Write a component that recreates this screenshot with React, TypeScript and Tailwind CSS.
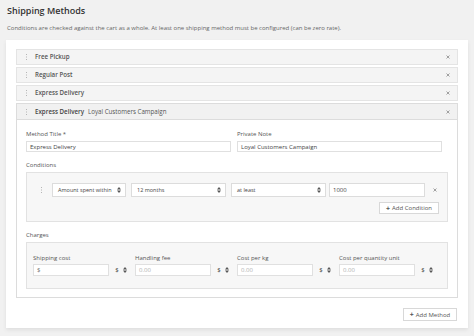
import React from "react";

function Handle() {
  return (
    <svg width="3" height="6" viewBox="0 0 3 6" className="shrink-0">
      <rect x="1" y="0" width="1" height="1" fill="#b5b5b5" />
      <rect x="1" y="2.5" width="1" height="1" fill="#b5b5b5" />
      <rect x="1" y="5" width="1" height="1" fill="#b5b5b5" />
    </svg>
  );
}

function Arrows() {
  return (
    <svg width="4" height="6" viewBox="0 0 4 6" className="shrink-0">
      <path d="M2 0 L4 2.4 L0 2.4 Z" fill="#555" />
      <path d="M2 6 L4 3.6 L0 3.6 Z" fill="#555" />
    </svg>
  );
}

function Close() {
  return (
    <svg width="4" height="4" viewBox="0 0 4 4" className="shrink-0">
      <path d="M0.5 0.5 L3.5 3.5 M3.5 0.5 L0.5 3.5" stroke="#a0a0a0" strokeWidth="1" />
    </svg>
  );
}

function Row({ title }: { title: string }) {
  return (
    <div className="h-[16px] flex items-center bg-[#f4f4f4] border border-[#e4e4e4] pl-[8px] pr-[7px]">
      <Handle />
      <span className="ml-[7px] text-[6.2px] font-semibold text-[#555]">{title}</span>
      <span className="ml-auto flex">
        <Close />
      </span>
    </div>
  );
}

function Select({ label, w }: { label: string; w: string }) {
  return (
    <div className={`${w} h-[14px] bg-white border border-[#dcdcdc] flex items-center pl-[5px] pr-[4px]`}>
      <span className="text-[5.5px] text-[#444]">{label}</span>
      <span className="ml-auto flex">
        <Arrows />
      </span>
    </div>
  );
}

function Charge({ label, value, muted }: { label: string; value: string; muted?: boolean }) {
  return (
    <div>
      <p className="text-[6px] leading-[8px] text-[#555]">{label}</p>
      <div className="mt-[2px] flex items-center">
        <div className="flex-1 h-[12px] bg-white border border-[#e0e0e0] flex items-center pl-[3px]">
          <span className={`text-[6px] ${muted ? "text-[#b0b0b0]" : "text-[#777]"}`}>{value}</span>
        </div>
        <div className="w-[20px] ml-[2px] flex items-center justify-center gap-[4px]">
          <span className="text-[6px] text-[#444]">$</span>
          <Arrows />
        </div>
      </div>
    </div>
  );
}

export default function App() {
  return (
    <div className="w-[474px] h-[336px] overflow-hidden bg-[#f1f1f1] font-['Open_Sans',sans-serif] text-[6px] leading-[8px] pt-[5px]">
      <h2 className="px-[7px] text-[9px] leading-[12px] font-semibold text-[#333]">Shipping Methods</h2>
      <p className="px-[7px] mt-[7px] text-[6px] leading-[8px] text-[#666]">
        Conditions are checked against the cart as a whole. At least one shipping method must be configured (can be zero rate).
      </p>

      <div className="ml-[6px] mt-[8px] w-[462px] h-[288px] bg-white shadow-[0_2px_4px_rgba(0,0,0,0.08)] px-[10px] pt-[9px] pb-[7px] flex flex-col">
        <div className="flex flex-col gap-[2px]">
          <Row title="Free Pickup" />
          <Row title="Regular Post" />
          <Row title="Express Delivery" />
        </div>

        <div className="mt-[2px] border border-[#dcdcdc]">
          <div className="h-[16px] flex items-center bg-[#f1f1f1] border-b border-[#dcdcdc] pl-[8px] pr-[7px]">
            <Handle />
            <span className="ml-[7px] text-[6.2px] font-semibold text-[#444]">Express Delivery</span>
            <span className="ml-[4px] text-[6.2px] text-[#555]">Loyal Customers Campaign</span>
            <span className="ml-auto flex">
              <Close />
            </span>
          </div>

          <div className="px-[9px] pt-[10px] pb-[8px]">
            <div className="grid grid-cols-2 gap-[6px] pr-[6px]">
              <div>
                <p className="text-[6px] leading-[8px] text-[#555]">Method Title *</p>
                <div className="mt-[3px] h-[11px] border border-[#e0e0e0] flex items-center pl-[3px]">
                  <span className="text-[6px] text-[#444]">Express Delivery</span>
                </div>
              </div>
              <div>
                <p className="text-[6px] leading-[8px] text-[#555]">Private Note</p>
                <div className="mt-[3px] h-[11px] border border-[#e0e0e0] flex items-center pl-[3px]">
                  <span className="text-[6px] text-[#444]">Loyal Customers Campaign</span>
                </div>
              </div>
            </div>

            <p className="mt-[9px] text-[6px] leading-[8px] text-[#555]">Conditions</p>
            <div className="mt-[3px] h-[50px] bg-[#f7f7f7] border border-[#e2e2e2] pt-[10px] pr-[8px] pl-[13px]">
              <div className="flex items-center">
                <Handle />
                <div className="ml-[9px] flex items-center gap-[5px]">
                  <Select label="Amount spent within" w="w-[74px]" />
                  <Select label="12 months" w="w-[95px]" />
                  <Select label="at least" w="w-[95px]" />
                  <div className="w-[96px] h-[14px] bg-white border border-[#dcdcdc] flex items-center pl-[3px] -ml-[2px]">
                    <span className="text-[6px] text-[#444]">1000</span>
                  </div>
                </div>
                <span className="ml-[8px] flex">
                  <Close />
                </span>
              </div>
              <div className="mt-[5px] flex justify-end">
                <div className="h-[12px] w-[60px] bg-white border border-[#d8d8d8] flex items-center justify-center gap-[2px]">
                  <span className="text-[7px] leading-none font-bold text-[#555]">+</span>
                  <span className="text-[6px] text-[#555]">Add Condition</span>
                </div>
              </div>
            </div>

            <p className="mt-[9px] text-[6px] leading-[8px] text-[#555]">Charges</p>
            <div className="mt-[3px] h-[47px] bg-[#f7f7f7] border border-[#e2e2e2] pt-[11px] pl-[6px] pr-[10px]">
              <div className="grid grid-cols-4 gap-[4px]">
                <Charge label="Shipping cost" value="$" />
                <Charge label="Handling fee" value="0.00" muted />
                <Charge label="Cost per kg" value="0.00" muted />
                <Charge label="Cost per quantity unit" value="0.00" muted />
              </div>
            </div>
          </div>
        </div>

        <div className="mt-[10px] flex justify-end pr-[1px]">
          <div className="h-[13px] w-[54px] bg-white border border-[#d8d8d8] flex items-center justify-center gap-[2px]">
            <span className="text-[7px] leading-none font-bold text-[#555]">+</span>
            <span className="text-[6px] text-[#555]">Add Method</span>
          </div>
        </div>
      </div>
    </div>
  );
}
